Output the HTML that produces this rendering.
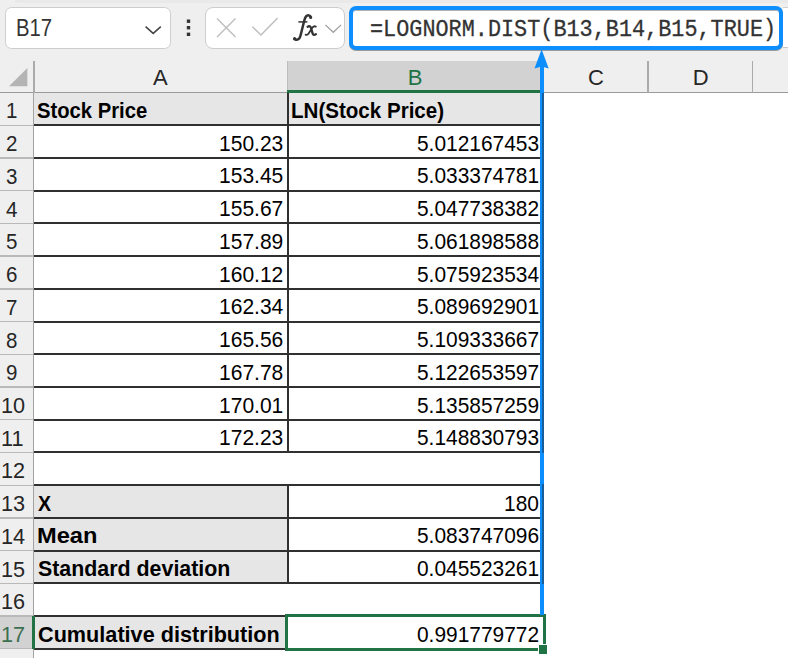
<!DOCTYPE html>
<html><head><meta charset="utf-8"><style>
html,body{margin:0;padding:0;width:788px;height:658px;overflow:hidden;background:#fff}
.r{position:absolute}
.t{position:absolute;line-height:1;white-space:nowrap;transform-origin:0 0}
</style></head><body>
<div class="r" style="left:0.00px;top:0.00px;width:788.00px;height:658.00px;background:#ffffff;"></div>
<div class="r" style="left:0.00px;top:0.00px;width:788.00px;height:92.50px;background:#efefef;"></div>
<div class="r" style="left:15.00px;top:0.00px;width:773.00px;height:2.60px;background:#e9e9e9;border-bottom-left-radius:3px;"></div>
<div class="r" style="left:0.00px;top:92.50px;width:33.60px;height:565.50px;background:#efefef;"></div>
<div class="r" style="left:286.60px;top:60.50px;width:255.90px;height:32.00px;background:#d2d2d2;"></div>
<div class="r" style="left:286.60px;top:60.50px;width:1.70px;height:30.50px;background:#bdbdbd;"></div>
<div class="r" style="left:0.00px;top:91.90px;width:788.00px;height:1.20px;background:#9a9a9a;"></div>
<div class="r" style="left:286.60px;top:90.00px;width:255.90px;height:3.00px;background:#217346;"></div>
<div class="r" style="left:33.00px;top:60.50px;width:1.60px;height:32.00px;background:#ababab;"></div>
<div class="r" style="left:647.20px;top:60.50px;width:1.60px;height:32.00px;background:#ababab;"></div>
<div class="r" style="left:751.80px;top:60.50px;width:1.60px;height:32.00px;background:#ababab;"></div>
<svg class="r" style="left:0;top:0" width="40" height="95"><polygon points="9,86.3 27.4,86.3 27.4,68" fill="#b4b4b4"/></svg>
<div class="r" style="left:33.60px;top:92.56px;width:509.40px;height:32.72px;background:#e7e6e6;"></div>
<div class="r" style="left:33.60px;top:485.20px;width:253.90px;height:32.72px;background:#e7e6e6;"></div>
<div class="r" style="left:33.60px;top:517.92px;width:253.90px;height:32.72px;background:#e7e6e6;"></div>
<div class="r" style="left:33.60px;top:550.64px;width:253.90px;height:32.72px;background:#e7e6e6;"></div>
<div class="r" style="left:33.60px;top:616.08px;width:253.90px;height:32.72px;background:#e7e6e6;"></div>
<div class="r" style="left:0.00px;top:616.08px;width:32.80px;height:32.72px;background:#d2d2d2;"></div>
<div class="r" style="left:0.00px;top:124.58px;width:32.80px;height:1.40px;background:#b9b9b9;"></div>
<div class="r" style="left:0.00px;top:157.30px;width:32.80px;height:1.40px;background:#b9b9b9;"></div>
<div class="r" style="left:0.00px;top:190.02px;width:32.80px;height:1.40px;background:#b9b9b9;"></div>
<div class="r" style="left:0.00px;top:222.74px;width:32.80px;height:1.40px;background:#b9b9b9;"></div>
<div class="r" style="left:0.00px;top:255.46px;width:32.80px;height:1.40px;background:#b9b9b9;"></div>
<div class="r" style="left:0.00px;top:288.18px;width:32.80px;height:1.40px;background:#b9b9b9;"></div>
<div class="r" style="left:0.00px;top:320.90px;width:32.80px;height:1.40px;background:#b9b9b9;"></div>
<div class="r" style="left:0.00px;top:353.62px;width:32.80px;height:1.40px;background:#b9b9b9;"></div>
<div class="r" style="left:0.00px;top:386.34px;width:32.80px;height:1.40px;background:#b9b9b9;"></div>
<div class="r" style="left:0.00px;top:419.06px;width:32.80px;height:1.40px;background:#b9b9b9;"></div>
<div class="r" style="left:0.00px;top:451.78px;width:32.80px;height:1.40px;background:#b9b9b9;"></div>
<div class="r" style="left:0.00px;top:484.50px;width:32.80px;height:1.40px;background:#b9b9b9;"></div>
<div class="r" style="left:0.00px;top:517.22px;width:32.80px;height:1.40px;background:#b9b9b9;"></div>
<div class="r" style="left:0.00px;top:549.94px;width:32.80px;height:1.40px;background:#b9b9b9;"></div>
<div class="r" style="left:0.00px;top:582.66px;width:32.80px;height:1.40px;background:#b9b9b9;"></div>
<div class="r" style="left:0.00px;top:615.38px;width:32.80px;height:1.40px;background:#b9b9b9;"></div>
<div class="r" style="left:0.00px;top:648.10px;width:32.80px;height:1.40px;background:#b9b9b9;"></div>
<div class="r" style="left:32.80px;top:92.50px;width:1.60px;height:565.50px;background:#a3a3a3;"></div>
<div class="r" style="left:33.60px;top:124.28px;width:509.40px;height:2.00px;background:#303030;"></div>
<div class="r" style="left:33.60px;top:157.00px;width:509.40px;height:2.00px;background:#303030;"></div>
<div class="r" style="left:33.60px;top:189.72px;width:509.40px;height:2.00px;background:#303030;"></div>
<div class="r" style="left:33.60px;top:222.44px;width:509.40px;height:2.00px;background:#303030;"></div>
<div class="r" style="left:33.60px;top:255.16px;width:509.40px;height:2.00px;background:#303030;"></div>
<div class="r" style="left:33.60px;top:287.88px;width:509.40px;height:2.00px;background:#303030;"></div>
<div class="r" style="left:33.60px;top:320.60px;width:509.40px;height:2.00px;background:#303030;"></div>
<div class="r" style="left:33.60px;top:353.32px;width:509.40px;height:2.00px;background:#303030;"></div>
<div class="r" style="left:33.60px;top:386.04px;width:509.40px;height:2.00px;background:#303030;"></div>
<div class="r" style="left:33.60px;top:418.76px;width:509.40px;height:2.00px;background:#303030;"></div>
<div class="r" style="left:33.60px;top:451.48px;width:509.40px;height:2.00px;background:#303030;"></div>
<div class="r" style="left:33.60px;top:484.20px;width:509.40px;height:2.00px;background:#303030;"></div>
<div class="r" style="left:33.60px;top:516.92px;width:509.40px;height:2.00px;background:#303030;"></div>
<div class="r" style="left:33.60px;top:549.64px;width:509.40px;height:2.00px;background:#303030;"></div>
<div class="r" style="left:33.60px;top:582.36px;width:509.40px;height:2.00px;background:#303030;"></div>
<div class="r" style="left:33.60px;top:615.08px;width:509.40px;height:2.00px;background:#303030;"></div>
<div class="r" style="left:33.60px;top:647.80px;width:509.40px;height:2.00px;background:#303030;"></div>
<div class="r" style="left:286.50px;top:92.56px;width:2.00px;height:360.92px;background:#303030;"></div>
<div class="r" style="left:542.00px;top:92.56px;width:2.00px;height:360.92px;background:#303030;"></div>
<div class="r" style="left:286.50px;top:484.20px;width:2.00px;height:100.16px;background:#303030;"></div>
<div class="r" style="left:542.00px;top:484.20px;width:2.00px;height:100.16px;background:#303030;"></div>
<div class="r" style="left:284.60px;top:613.70px;width:261.10px;height:37.50px;background:transparent;box-sizing:border-box;border:3.5px solid #217346;"></div>
<div class="r" style="left:537.60px;top:643.50px;width:10.90px;height:11.00px;background:#217346;border:1.5px solid #fff;box-sizing:border-box;"></div>
<div class="r" style="left:31.80px;top:615.58px;width:3.00px;height:33.72px;background:#217346;"></div>
<div class="t" style="left:36.99px;top:101.03px;font-size:21.5px;font-family:'Liberation Sans', sans-serif;font-weight:bold;font-style:normal;color:#000;transform:scaleX(0.9410);">Stock Price</div>
<div class="t" style="left:291.16px;top:101.03px;font-size:21.5px;font-family:'Liberation Sans', sans-serif;font-weight:bold;font-style:normal;color:#000;transform:scaleX(0.9560);">LN(Stock Price)</div>
<div class="t" style="left:218.61px;top:133.75px;font-size:21.5px;font-family:'Liberation Sans', sans-serif;font-weight:normal;font-style:normal;color:#000;transform:scaleX(0.9780);">150.23</div>
<div class="t" style="left:417.00px;top:133.75px;font-size:21.5px;font-family:'Liberation Sans', sans-serif;font-weight:normal;font-style:normal;color:#000;transform:scaleX(0.9720);">5.012167453</div>
<div class="t" style="left:218.61px;top:166.47px;font-size:21.5px;font-family:'Liberation Sans', sans-serif;font-weight:normal;font-style:normal;color:#000;transform:scaleX(0.9780);">153.45</div>
<div class="t" style="left:417.00px;top:166.47px;font-size:21.5px;font-family:'Liberation Sans', sans-serif;font-weight:normal;font-style:normal;color:#000;transform:scaleX(0.9720);">5.033374781</div>
<div class="t" style="left:218.61px;top:199.19px;font-size:21.5px;font-family:'Liberation Sans', sans-serif;font-weight:normal;font-style:normal;color:#000;transform:scaleX(0.9780);">155.67</div>
<div class="t" style="left:417.00px;top:199.19px;font-size:21.5px;font-family:'Liberation Sans', sans-serif;font-weight:normal;font-style:normal;color:#000;transform:scaleX(0.9720);">5.047738382</div>
<div class="t" style="left:218.61px;top:231.91px;font-size:21.5px;font-family:'Liberation Sans', sans-serif;font-weight:normal;font-style:normal;color:#000;transform:scaleX(0.9780);">157.89</div>
<div class="t" style="left:417.00px;top:231.91px;font-size:21.5px;font-family:'Liberation Sans', sans-serif;font-weight:normal;font-style:normal;color:#000;transform:scaleX(0.9720);">5.061898588</div>
<div class="t" style="left:218.61px;top:264.63px;font-size:21.5px;font-family:'Liberation Sans', sans-serif;font-weight:normal;font-style:normal;color:#000;transform:scaleX(0.9780);">160.12</div>
<div class="t" style="left:417.00px;top:264.63px;font-size:21.5px;font-family:'Liberation Sans', sans-serif;font-weight:normal;font-style:normal;color:#000;transform:scaleX(0.9720);">5.075923534</div>
<div class="t" style="left:218.61px;top:297.35px;font-size:21.5px;font-family:'Liberation Sans', sans-serif;font-weight:normal;font-style:normal;color:#000;transform:scaleX(0.9780);">162.34</div>
<div class="t" style="left:417.00px;top:297.35px;font-size:21.5px;font-family:'Liberation Sans', sans-serif;font-weight:normal;font-style:normal;color:#000;transform:scaleX(0.9720);">5.089692901</div>
<div class="t" style="left:218.61px;top:330.07px;font-size:21.5px;font-family:'Liberation Sans', sans-serif;font-weight:normal;font-style:normal;color:#000;transform:scaleX(0.9780);">165.56</div>
<div class="t" style="left:417.00px;top:330.07px;font-size:21.5px;font-family:'Liberation Sans', sans-serif;font-weight:normal;font-style:normal;color:#000;transform:scaleX(0.9720);">5.109333667</div>
<div class="t" style="left:218.61px;top:362.79px;font-size:21.5px;font-family:'Liberation Sans', sans-serif;font-weight:normal;font-style:normal;color:#000;transform:scaleX(0.9780);">167.78</div>
<div class="t" style="left:417.00px;top:362.79px;font-size:21.5px;font-family:'Liberation Sans', sans-serif;font-weight:normal;font-style:normal;color:#000;transform:scaleX(0.9720);">5.122653597</div>
<div class="t" style="left:218.61px;top:395.51px;font-size:21.5px;font-family:'Liberation Sans', sans-serif;font-weight:normal;font-style:normal;color:#000;transform:scaleX(0.9780);">170.01</div>
<div class="t" style="left:417.00px;top:395.51px;font-size:21.5px;font-family:'Liberation Sans', sans-serif;font-weight:normal;font-style:normal;color:#000;transform:scaleX(0.9720);">5.135857259</div>
<div class="t" style="left:218.61px;top:428.23px;font-size:21.5px;font-family:'Liberation Sans', sans-serif;font-weight:normal;font-style:normal;color:#000;transform:scaleX(0.9780);">172.23</div>
<div class="t" style="left:417.00px;top:428.23px;font-size:21.5px;font-family:'Liberation Sans', sans-serif;font-weight:normal;font-style:normal;color:#000;transform:scaleX(0.9720);">5.148830793</div>
<div class="t" style="left:38.20px;top:493.67px;font-size:21.5px;font-family:'Liberation Sans', sans-serif;font-weight:bold;font-style:normal;color:#000;transform:scaleX(0.9100);">X</div>
<div class="t" style="left:36.74px;top:526.39px;font-size:21.5px;font-family:'Liberation Sans', sans-serif;font-weight:bold;font-style:normal;color:#000;transform:scaleX(1.1000);">Mean</div>
<div class="t" style="left:37.76px;top:559.11px;font-size:21.5px;font-family:'Liberation Sans', sans-serif;font-weight:bold;font-style:normal;color:#000;transform:scaleX(0.9940);">Standard deviation</div>
<div class="t" style="left:37.53px;top:624.55px;font-size:21.5px;font-family:'Liberation Sans', sans-serif;font-weight:bold;font-style:normal;color:#000;transform:scaleX(1.0070);">Cumulative distribution</div>
<div class="t" style="left:503.90px;top:493.67px;font-size:21.5px;font-family:'Liberation Sans', sans-serif;font-weight:normal;font-style:normal;color:#000;transform:scaleX(0.9730);">180</div>
<div class="t" style="left:417.00px;top:526.39px;font-size:21.5px;font-family:'Liberation Sans', sans-serif;font-weight:normal;font-style:normal;color:#000;transform:scaleX(0.9720);">5.083747096</div>
<div class="t" style="left:417.00px;top:559.11px;font-size:21.5px;font-family:'Liberation Sans', sans-serif;font-weight:normal;font-style:normal;color:#000;transform:scaleX(0.9720);">0.045523261</div>
<div class="t" style="left:417.00px;top:624.55px;font-size:21.5px;font-family:'Liberation Sans', sans-serif;font-weight:normal;font-style:normal;color:#000;transform:scaleX(0.9720);">0.991779772</div>
<div class="t" style="left:152.96px;top:66.96px;font-size:22px;font-family:'Liberation Sans', sans-serif;font-weight:normal;font-style:normal;color:#262626;transform:scaleX(1.0000);">A</div>
<div class="t" style="left:407.66px;top:66.96px;font-size:22px;font-family:'Liberation Sans', sans-serif;font-weight:normal;font-style:normal;color:#217346;transform:scaleX(1.0000);">B</div>
<div class="t" style="left:587.91px;top:66.96px;font-size:22px;font-family:'Liberation Sans', sans-serif;font-weight:normal;font-style:normal;color:#262626;transform:scaleX(1.0000);">C</div>
<div class="t" style="left:692.71px;top:66.96px;font-size:22px;font-family:'Liberation Sans', sans-serif;font-weight:normal;font-style:normal;color:#262626;transform:scaleX(1.0000);">D</div>
<div class="t" style="left:6.35px;top:99.46px;font-size:22.8px;font-family:'Liberation Sans', sans-serif;font-weight:normal;font-style:normal;color:#262626;transform:scaleX(0.9000);">1</div>
<div class="t" style="left:6.35px;top:132.18px;font-size:22.8px;font-family:'Liberation Sans', sans-serif;font-weight:normal;font-style:normal;color:#262626;transform:scaleX(0.9000);">2</div>
<div class="t" style="left:6.35px;top:164.90px;font-size:22.8px;font-family:'Liberation Sans', sans-serif;font-weight:normal;font-style:normal;color:#262626;transform:scaleX(0.9000);">3</div>
<div class="t" style="left:6.35px;top:197.62px;font-size:22.8px;font-family:'Liberation Sans', sans-serif;font-weight:normal;font-style:normal;color:#262626;transform:scaleX(0.9000);">4</div>
<div class="t" style="left:6.35px;top:230.34px;font-size:22.8px;font-family:'Liberation Sans', sans-serif;font-weight:normal;font-style:normal;color:#262626;transform:scaleX(0.9000);">5</div>
<div class="t" style="left:6.35px;top:263.06px;font-size:22.8px;font-family:'Liberation Sans', sans-serif;font-weight:normal;font-style:normal;color:#262626;transform:scaleX(0.9000);">6</div>
<div class="t" style="left:6.35px;top:295.78px;font-size:22.8px;font-family:'Liberation Sans', sans-serif;font-weight:normal;font-style:normal;color:#262626;transform:scaleX(0.9000);">7</div>
<div class="t" style="left:6.35px;top:328.50px;font-size:22.8px;font-family:'Liberation Sans', sans-serif;font-weight:normal;font-style:normal;color:#262626;transform:scaleX(0.9000);">8</div>
<div class="t" style="left:6.35px;top:361.22px;font-size:22.8px;font-family:'Liberation Sans', sans-serif;font-weight:normal;font-style:normal;color:#262626;transform:scaleX(0.9000);">9</div>
<div class="t" style="left:1.05px;top:393.94px;font-size:22.8px;font-family:'Liberation Sans', sans-serif;font-weight:normal;font-style:normal;color:#262626;transform:scaleX(0.9500);">10</div>
<div class="t" style="left:1.05px;top:426.66px;font-size:22.8px;font-family:'Liberation Sans', sans-serif;font-weight:normal;font-style:normal;color:#262626;transform:scaleX(0.9500);">11</div>
<div class="t" style="left:1.05px;top:459.38px;font-size:22.8px;font-family:'Liberation Sans', sans-serif;font-weight:normal;font-style:normal;color:#262626;transform:scaleX(0.9500);">12</div>
<div class="t" style="left:1.05px;top:492.10px;font-size:22.8px;font-family:'Liberation Sans', sans-serif;font-weight:normal;font-style:normal;color:#262626;transform:scaleX(0.9500);">13</div>
<div class="t" style="left:1.05px;top:524.82px;font-size:22.8px;font-family:'Liberation Sans', sans-serif;font-weight:normal;font-style:normal;color:#262626;transform:scaleX(0.9500);">14</div>
<div class="t" style="left:1.05px;top:557.54px;font-size:22.8px;font-family:'Liberation Sans', sans-serif;font-weight:normal;font-style:normal;color:#262626;transform:scaleX(0.9500);">15</div>
<div class="t" style="left:1.05px;top:590.26px;font-size:22.8px;font-family:'Liberation Sans', sans-serif;font-weight:normal;font-style:normal;color:#262626;transform:scaleX(0.9500);">16</div>
<div class="t" style="left:1.05px;top:622.98px;font-size:22.8px;font-family:'Liberation Sans', sans-serif;font-weight:normal;font-style:normal;color:#3a7050;transform:scaleX(0.9500);">17</div>
<div class="r" style="left:4.80px;top:7.00px;width:166.50px;height:41.90px;background:#fff;box-sizing:border-box;border:1px solid #cdcdcd;border-radius:6.5px;"></div>
<div class="t" style="left:16.38px;top:16.85px;font-size:23.6px;font-family:'Liberation Sans', sans-serif;font-weight:normal;font-style:normal;color:#333;transform:scaleX(0.8600);">B17</div>
<svg class="r" style="left:0;top:0" width="788" height="60"><polyline points="145.6,26.6 153.2,33.4 160.8,26.6" fill="none" stroke="#444" stroke-width="1.5"/><rect x="186.8" y="19.5" width="3.4" height="3.4" fill="#333"/><rect x="186.8" y="26.0" width="3.4" height="3.4" fill="#333"/><rect x="186.8" y="32.6" width="3.4" height="3.4" fill="#333"/></svg>
<div class="r" style="left:204.60px;top:7.00px;width:140.20px;height:41.90px;background:#fff;box-sizing:border-box;border:1px solid #cdcdcd;border-radius:8px;"></div>
<svg class="r" style="left:0;top:0" width="788" height="60"><path d="M217,18.5 L235.5,37 M235.5,18.5 L217,37" fill="none" stroke="#bdbdbd" stroke-width="1.4"/><polyline points="252.4,26.8 261,34.9 277.6,18.1" fill="none" stroke="#bdbdbd" stroke-width="1.4"/><polyline points="325.4,24.9 333.3,32.3 341.1,24.9" fill="none" stroke="#a0a0a0" stroke-width="1.3"/></svg>
<svg class="r" style="left:0;top:0" width="788" height="60"><path d="M310.9,17.2 C310.2,15.2 307.6,14.6 305.9,16.6 C304.9,17.8 304.5,19.5 304.1,21.2 L300.6,35.2 C300.0,37.8 298.6,39.6 296.6,39.8 C295.6,39.9 294.8,39.5 294.3,38.9" fill="none" stroke="#333" stroke-width="2.5" stroke-linecap="round"/><circle cx="310.6" cy="17.6" r="1.5" fill="#333"/><circle cx="294.6" cy="38.6" r="1.5" fill="#333"/><path d="M298.4,21.9 L307.4,21.9" fill="none" stroke="#333" stroke-width="1.5"/><path d="M307.6,26.8 C309.4,25.8 310.6,26.2 311.1,28.2 L312.6,33.4 C313.1,35.2 314.4,35.4 315.9,34.2" fill="none" stroke="#333" stroke-width="2.3" stroke-linecap="round"/><path d="M315.8,26.6 C314.2,25.8 312.9,26.6 311.8,28.4 L308.8,33.2 C307.8,34.8 306.8,35.3 305.6,34.6" fill="none" stroke="#333" stroke-width="1.8" stroke-linecap="round"/></svg>
<div class="r" style="left:783.00px;top:7.30px;width:5.00px;height:41.00px;background:#fff;box-sizing:border-box;border-top:1px solid #d0d0d0;border-bottom:1px solid #c8c8c8;"></div>
<div class="r" style="left:349.00px;top:6.30px;width:433.70px;height:43.50px;background:#fff;box-sizing:border-box;border:4.5px solid #0d8eff;border-radius:7px;box-shadow:inset 0 1px 0 rgba(0,0,0,.3),0 1px 0 rgba(0,0,0,.35);"></div>
<div class="t" style="left:369.89px;top:17.76px;font-size:24.4px;font-family:'Liberation Mono', monospace;font-weight:normal;font-style:normal;color:#333;transform:scaleX(0.8950);-webkit-text-stroke:0.3px #333;">=LOGNORM.DIST(B13,B14,B15,TRUE)</div>
<div class="r" style="left:539.80px;top:66.00px;width:3.80px;height:548.50px;background:#0d8eff;"></div>
<div class="r" style="left:542.40px;top:92.56px;width:1.60px;height:360.92px;background:#185d9c;"></div>
<div class="r" style="left:542.40px;top:484.20px;width:1.60px;height:100.16px;background:#185d9c;"></div>
<svg class="r" style="left:0;top:0" width="788" height="100"><polygon points="541.6,49.3 534.5,68.6 541.6,66.6 548.7,68.6" fill="#0d8eff"/></svg>
</body></html>
